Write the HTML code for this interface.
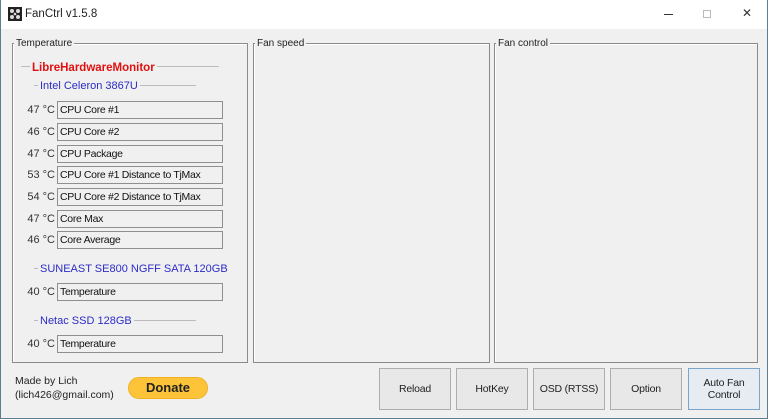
<!DOCTYPE html>
<html><head><meta charset="utf-8"><style>
*{margin:0;padding:0;box-sizing:border-box}
body{width:768px;height:419px;overflow:hidden;background:#f0f0f0;font-family:"Liberation Sans",sans-serif;font-size:11px;color:#111;position:relative}
.a{position:absolute}
.win{left:0;top:0;width:768px;height:419px;border:1px solid #5a7f95;border-top:none}
.title{left:1px;top:0;width:766px;height:29px;background:#fff}
.gb{border:1px solid #8a8a8a;box-shadow:inset 1px 1px 0 #fff}
.lg{background:#f0f0f0;padding:0 2px;font-size:10px;color:#222}
.tb{left:57px;width:166px;height:18px;border:1px solid #8f8f8f;background:#f0f0f0;font-size:10.5px;padding-left:2px;line-height:16px;letter-spacing:-0.3px}
.t{left:22px;width:33px;font-size:11px;color:#333;text-align:right}
.ln{height:1px;background:#bbb}
.hd{color:#2c2cc8;font-size:11px}
.btn{top:368px;width:72px;height:42px;border:1px solid #adadad;background:#e8e8e8;font-size:10.5px;color:#222;display:flex;align-items:center;justify-content:center;text-align:center;line-height:12px;letter-spacing:-0.2px}
</style></head><body>
<div class="a title"></div>
<div class="a win"></div>
<svg class="a" style="left:8px;top:7px" width="14" height="14" viewBox="0 0 14 14"><rect width="14" height="14" fill="#222"/><circle cx="4" cy="4" r="2" fill="#ddd"/><circle cx="10" cy="4" r="2" fill="#ddd"/><circle cx="4" cy="10" r="2" fill="#ddd"/><circle cx="10" cy="10" r="2" fill="#ddd"/><circle cx="7" cy="7" r="1.3" fill="#ddd"/></svg>
<div class="a" style="left:25px;top:8px;font-size:11.5px;color:#222">FanCtrl v1.5.8</div>
<div class="a" style="left:664px;top:14px;width:9px;height:1px;background:#333"></div>
<div class="a" style="left:703px;top:10px;width:8px;height:8px;border:1px solid #bbb"></div>
<div class="a" style="left:742px;top:6px;font-size:12px;color:#333">✕</div>

<div class="a gb" style="left:12px;top:43px;width:236px;height:320px"></div>
<div class="a lg" style="left:14px;top:38px">Temperature</div>
<div class="a gb" style="left:253px;top:43px;width:237px;height:320px"></div>
<div class="a lg" style="left:255px;top:38px">Fan speed</div>
<div class="a gb" style="left:494px;top:43px;width:264px;height:320px"></div>
<div class="a lg" style="left:496px;top:38px">Fan control</div>

<div class="a ln" style="left:21px;top:66px;width:198px"></div>
<div class="a" style="left:30px;top:62px;background:#f0f0f0;padding:0 2px;color:#e01010;font-weight:bold;font-size:11.5px">LibreHardwareMonitor</div>
<div class="a ln" style="left:34px;top:85px;width:162px"></div>
<div class="a hd" style="left:38px;top:80px;background:#f0f0f0;padding:0 2px">Intel Celeron 3867U</div>

<div class="a t" style="top:104px">47 °C</div><div class="a tb" style="top:101px">CPU Core #1</div>
<div class="a t" style="top:126px">46 °C</div><div class="a tb" style="top:123px">CPU Core #2</div>
<div class="a t" style="top:148px">47 °C</div><div class="a tb" style="top:145px">CPU Package</div>
<div class="a t" style="top:169px">53 °C</div><div class="a tb" style="top:166px">CPU Core #1 Distance to TjMax</div>
<div class="a t" style="top:191px">54 °C</div><div class="a tb" style="top:188px">CPU Core #2 Distance to TjMax</div>
<div class="a t" style="top:213px">47 °C</div><div class="a tb" style="top:210px">Core Max</div>
<div class="a t" style="top:234px">46 °C</div><div class="a tb" style="top:231px">Core Average</div>

<div class="a ln" style="left:34px;top:268px;width:30px"></div>
<div class="a hd" style="left:38px;top:263px;background:#f0f0f0;padding:0 2px">SUNEAST SE800 NGFF SATA 120GB</div>
<div class="a t" style="top:286px">40 °C</div><div class="a tb" style="top:283px">Temperature</div>

<div class="a ln" style="left:34px;top:320px;width:162px"></div>
<div class="a hd" style="left:38px;top:315px;background:#f0f0f0;padding:0 2px">Netac SSD 128GB</div>
<div class="a t" style="top:338px">40 °C</div><div class="a tb" style="top:335px">Temperature</div>

<div class="a" style="left:15px;top:374px;font-size:10.5px;color:#222;line-height:14px">Made by Lich<br>(lich426@gmail.com)</div>
<div class="a" style="left:128px;top:377px;width:80px;height:22px;border-radius:11px;background:#fdc439;border:1px solid #f0b020;font-weight:bold;font-size:13px;color:#222;text-align:center;line-height:20px">Donate</div>

<div class="a btn" style="left:379px">Reload</div>
<div class="a btn" style="left:456px">HotKey</div>
<div class="a btn" style="left:533px">OSD (RTSS)</div>
<div class="a btn" style="left:610px">Option</div>
<div class="a btn" style="left:688px;border-color:#7aa6cc;background:#e6ecf2">Auto Fan<br>Control</div>
</body></html>
